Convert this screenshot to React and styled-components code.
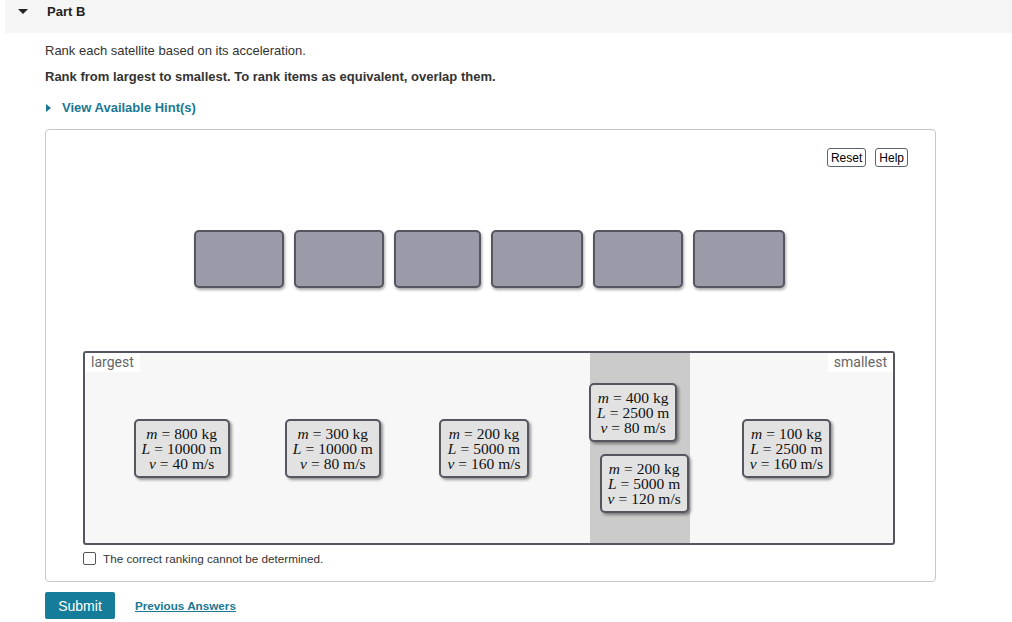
import React from 'react';
import styled, { createGlobalStyle } from 'styled-components';

const GlobalStyle = createGlobalStyle`
  body {
    margin: 0;
    background: #fff;
    font-family: "Liberation Sans", Arial, sans-serif;
    color: #333;
  }
`;

const Page = styled.div`
  width: 1012px;
`;

const PartHeader = styled.div`
  margin-left: 5px;
  height: 33px;
  background: #f5f5f5;
  display: flex;
  align-items: flex-start;
  padding: 4px 0 0 13px;
  box-sizing: border-box;
`;

const DownCaret = styled.span`
  width: 0;
  height: 0;
  border-left: 5px solid transparent;
  border-right: 5px solid transparent;
  border-top: 5px solid #222;
  margin: 5px 19px 0 0;
`;

const PartTitle = styled.h2`
  margin: 0;
  font-size: 13px;
  line-height: 15px;
  font-weight: bold;
  color: #222;
`;

const Content = styled.div`
  padding-left: 45px;
`;

const Prompt = styled.p`
  margin: ${({ first }) => (first ? '10px 0 0' : '11px 0 0')};
  font-size: 13px;
  line-height: 15px;
  font-weight: ${({ bold }) => (bold ? 'bold' : 'normal')};
`;

const HintToggle = styled.a`
  display: flex;
  align-items: center;
  margin-top: 16px;
  font-size: 13px;
  line-height: 15px;
  font-weight: bold;
  color: #1a7893;
  cursor: pointer;
`;

const RightCaret = styled.span`
  width: 0;
  height: 0;
  border-top: 4.5px solid transparent;
  border-bottom: 4.5px solid transparent;
  border-left: 5px solid #1a7893;
  margin: 0 11px 0 1px;
`;

const Workspace = styled.div`
  margin-top: 14px;
  width: 891px;
  height: 453px;
  box-sizing: border-box;
  border: 1px solid #c8c8c8;
  border-radius: 4px;
  display: flex;
  flex-direction: column;
  padding: 18px 27px 0 37px;
`;

const Toolbar = styled.div`
  display: flex;
  justify-content: flex-end;
  gap: 9px;
`;

const ToolButton = styled.button`
  height: 19px;
  padding: 0 3px;
  font-family: "Liberation Sans", Arial, sans-serif;
  font-size: 12px;
  color: #000;
  background: #fff;
  border: 1px solid #5a6470;
  border-radius: 3px;
`;

const SlotRow = styled.div`
  display: flex;
  justify-content: center;
  gap: 10px;
  margin: 63px 0 0 -13px;
`;

const Slot = styled.div`
  width: ${({ w }) => w}px;
  height: 58px;
  box-sizing: border-box;
  background: #9b9aa9;
  border: 2px solid #555660;
  border-radius: 5px;
  box-shadow: 1px 2px 3px rgba(0, 0, 0, 0.35);
`;

const RankArea = styled.div`
  position: relative;
  margin-top: 63px;
  width: 812px;
  height: 194px;
  box-sizing: border-box;
  border: 2px solid #555660;
  border-radius: 3px;
  background: #f7f7f7;
  display: grid;
  grid-template-columns: repeat(5, 151.2px);
  padding-left: 21px;
`;

const EndLabel = styled.span`
  position: absolute;
  top: 0;
  ${({ side }) => (side === 'right' ? 'right: 0;' : 'left: 0;')}
  background: #fff;
  padding: 1px 6px 2px;
  font-family: Roboto, "Liberation Sans", sans-serif;
  font-size: 14px;
  color: #666;
`;

const Column = styled.div`
  display: flex;
  justify-content: center;
  align-items: center;
`;

/* drop band shown where several items share one rank */
const TieBand = styled.div`
  align-self: stretch;
  width: 100px;
  margin-left: 10px;
  background: #cbcbcb;
  display: flex;
  flex-direction: column;
  justify-content: center;
  align-items: center;
  gap: 12px;
`;

const Card = styled.div`
  box-sizing: border-box;
  padding: 5px 6px;
  background: #e2e2e2;
  border: 2px solid #555660;
  border-radius: 5px;
  box-shadow: 2px 2px 3px rgba(0, 0, 0, 0.4);
  font-family: "Liberation Serif", "Times New Roman", serif;
  font-size: 15.5px;
  line-height: 15px;
  color: #111;
  text-align: center;
  white-space: nowrap;
  transform: translateX(${({ shift }) => shift || 0}px);
`;

const Var = styled.i`
  font-style: italic;
`;

const Eq = styled.span`
  margin: 0 4px;
`;

const CannotDetermine = styled.label`
  display: flex;
  align-items: center;
  margin-top: 7px;
  font-size: 11.7px;
  color: #333;
`;

const Box = styled.span`
  width: 11px;
  height: 11px;
  border: 1px solid #555;
  border-radius: 2px;
  margin-right: 7px;
  background: #fff;
`;

const Actions = styled.div`
  display: flex;
  align-items: center;
  margin-top: 10px;
  gap: 20px;
`;

const SubmitButton = styled.button`
  width: 70px;
  height: 27px;
  border: none;
  border-radius: 2px;
  background: #157d99;
  color: #fff;
  font-family: "Liberation Sans", Arial, sans-serif;
  font-size: 14px;
`;

const PrevLink = styled.a`
  font-size: 11.7px;
  font-weight: bold;
  color: #1a7893;
  text-decoration: underline;
`;

const slots = [90, 90, 87, 92, 90, 92];

const columns = [
  [{ m: 800, L: 10000, v: 40 }],
  [{ m: 300, L: 10000, v: 80 }],
  [{ m: 200, L: 5000, v: 160 }],
  [
    { m: 400, L: 2500, v: 80, shift: -7 },
    { m: 200, L: 5000, v: 120, shift: 4 },
  ],
  [{ m: 100, L: 2500, v: 160 }],
];

const SatelliteCard = ({ m, L, v, shift }) => (
  <Card shift={shift}>
    <div><Var>m</Var><Eq>=</Eq>{m} kg</div>
    <div><Var>L</Var><Eq>=</Eq>{L} m</div>
    <div><Var>v</Var><Eq>=</Eq>{v} m/s</div>
  </Card>
);

const App = () => (
  <Page>
    <GlobalStyle />
    <PartHeader>
      <DownCaret />
      <PartTitle>Part B</PartTitle>
    </PartHeader>
    <Content>
      <Prompt first>Rank each satellite based on its acceleration.</Prompt>
      <Prompt bold>Rank from largest to smallest. To rank items as equivalent, overlap them.</Prompt>
      <HintToggle>
        <RightCaret />
        View Available Hint(s)
      </HintToggle>
      <Workspace>
        <Toolbar>
          <ToolButton>Reset</ToolButton>
          <ToolButton>Help</ToolButton>
        </Toolbar>
        <SlotRow>
          {slots.map((w, i) => (
            <Slot key={i} w={w} />
          ))}
        </SlotRow>
        <RankArea>
          <EndLabel>largest</EndLabel>
          <EndLabel side="right">smallest</EndLabel>
          {columns.map((items, i) => (
            <Column key={i}>
              {items.length > 1 ? (
                <TieBand>
                  {items.map((s, j) => (
                    <SatelliteCard key={j} {...s} />
                  ))}
                </TieBand>
              ) : (
                <SatelliteCard {...items[0]} />
              )}
            </Column>
          ))}
        </RankArea>
        <CannotDetermine>
          <Box />
          The correct ranking cannot be determined.
        </CannotDetermine>
      </Workspace>
      <Actions>
        <SubmitButton>Submit</SubmitButton>
        <PrevLink>Previous Answers</PrevLink>
      </Actions>
    </Content>
  </Page>
);

export default App;
